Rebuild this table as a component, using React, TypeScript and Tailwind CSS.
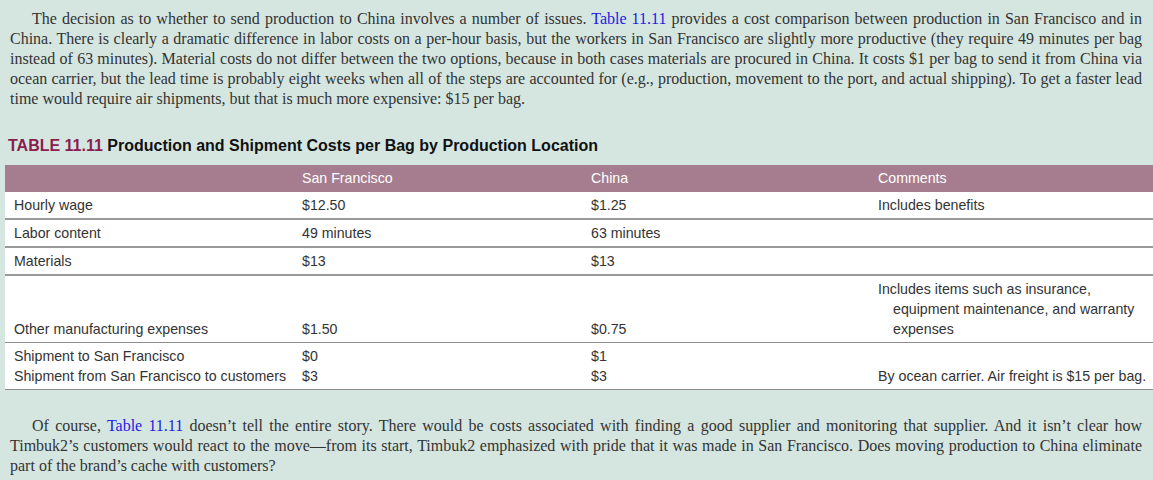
const serif = { fontFamily: '"Liberation Serif", "Times New Roman", serif' };

type Row = {
  label: string[];
  sf: string[];
  cn: string[];
  comment?: string;
  thick?: boolean;
};

const rows: Row[] = [
  { label: ["Hourly wage"], sf: ["$12.50"], cn: ["$1.25"], comment: "Includes benefits", thick: true },
  { label: ["Labor content"], sf: ["49 minutes"], cn: ["63 minutes"], thick: true },
  { label: ["Materials"], sf: ["$13"], cn: ["$13"], thick: true },
  {
    label: ["Other manufacturing expenses"],
    sf: ["$1.50"],
    cn: ["$0.75"],
    comment: "Includes items such as insurance, equipment maintenance, and warranty expenses",
  },
  {
    label: ["Shipment to San Francisco", "Shipment from San Francisco to customers"],
    sf: ["$0", "$3"],
    cn: ["$1", "$3"],
    comment: "By ocean carrier. Air freight is $15 per bag.",
  },
];

function Lines({ items }: { items: string[] }) {
  return (
    <>
      {items.map((t, i) => (
        <div key={i}>{t}</div>
      ))}
    </>
  );
}

export default function App() {
  return (
    <div className="w-[1153px] h-[480px] overflow-hidden bg-[#d5e6e1] text-[#333]">
      {/* intro paragraph */}
      <p
        className="pt-[9px] pl-[10px] pr-[11px] text-[16px] leading-[20px] text-justify indent-[22px]"
        style={serif}
      >
        The decision as to whether to send production to China involves a number of issues.{" "}
        <span className="text-[#1a1ae6]">Table 11.11</span> provides a cost comparison between production in San
        Francisco and in China. There is clearly a dramatic difference in labor costs on a per-hour basis, but the
        workers in San Francisco are slightly more productive (they require 49 minutes per bag instead of 63 minutes).
        Material costs do not differ between the two options, because in both cases materials are procured in China.
        It costs $1 per bag to send it from China via ocean carrier, but the lead time is probably eight weeks when all
        of the steps are accounted for (e.g., production, movement to the port, and actual shipping). To get a faster
        lead time would require air shipments, but that is much more expensive: $15 per bag.
      </p>

      {/* caption */}
      <div className="mt-[26px] pl-[8px] text-[16px] leading-[22px] font-bold font-['Liberation_Sans',Arial,sans-serif]">
        <span className="text-[#8a1c4f]">TABLE 11.11</span>{" "}
        <span className="text-[#111]">Production and Shipment Costs per Bag by Production Location</span>
      </div>

      {/* table */}
      <table className="mt-[8px] ml-[5px] w-[1148px] table-fixed border-collapse bg-white text-[14.2px] leading-[20px] text-[#333] font-['Liberation_Sans',Arial,sans-serif]">
        <thead>
          <tr className="bg-[#a67d8e] text-white">
            <th className="w-[288px] pl-[9px] pt-[3px] pb-[4px] text-left font-normal"></th>
            <th className="w-[289px] pl-[9px] pt-[3px] pb-[4px] text-left font-normal">San Francisco</th>
            <th className="w-[287px] pl-[9px] pt-[3px] pb-[4px] text-left font-normal">China</th>
            <th className="pl-[9px] pt-[3px] pb-[4px] text-left font-normal">Comments</th>
          </tr>
        </thead>
        <tbody>
          {rows.map((r, i) => (
            <tr
              key={i}
              className={r.thick ? "border-b-2 border-[#999]" : "border-b border-[#8c8c8c]"}
            >
              <td className="pl-[9px] pt-[3px] pb-[3px] align-bottom">
                <Lines items={r.label} />
              </td>
              <td className="pl-[9px] pt-[3px] pb-[3px] align-bottom">
                <Lines items={r.sf} />
              </td>
              <td className="pl-[9px] pt-[3px] pb-[3px] align-bottom">
                <Lines items={r.cn} />
              </td>
              <td className="pl-[9px] pr-[2px] pt-[3px] pb-[3px] align-bottom">
                {r.comment && <div className="pl-[15px] -indent-[15px]">{r.comment}</div>}
              </td>
            </tr>
          ))}
        </tbody>
      </table>

      {/* closing paragraph */}
      <p
        className="mt-[26px] pl-[10px] pr-[11px] text-[16px] leading-[20px] text-justify indent-[22px]"
        style={serif}
      >
        Of course, <span className="text-[#1a1ae6]">Table 11.11</span> doesn’t tell the entire story. There would be
        costs associated with finding a good supplier and monitoring that supplier. And it isn’t clear how Timbuk2’s
        customers would react to the move—from its start, Timbuk2 emphasized with pride that it was made in San
        Francisco. Does moving production to China eliminate part of the brand’s cache with customers?
      </p>
    </div>
  );
}
